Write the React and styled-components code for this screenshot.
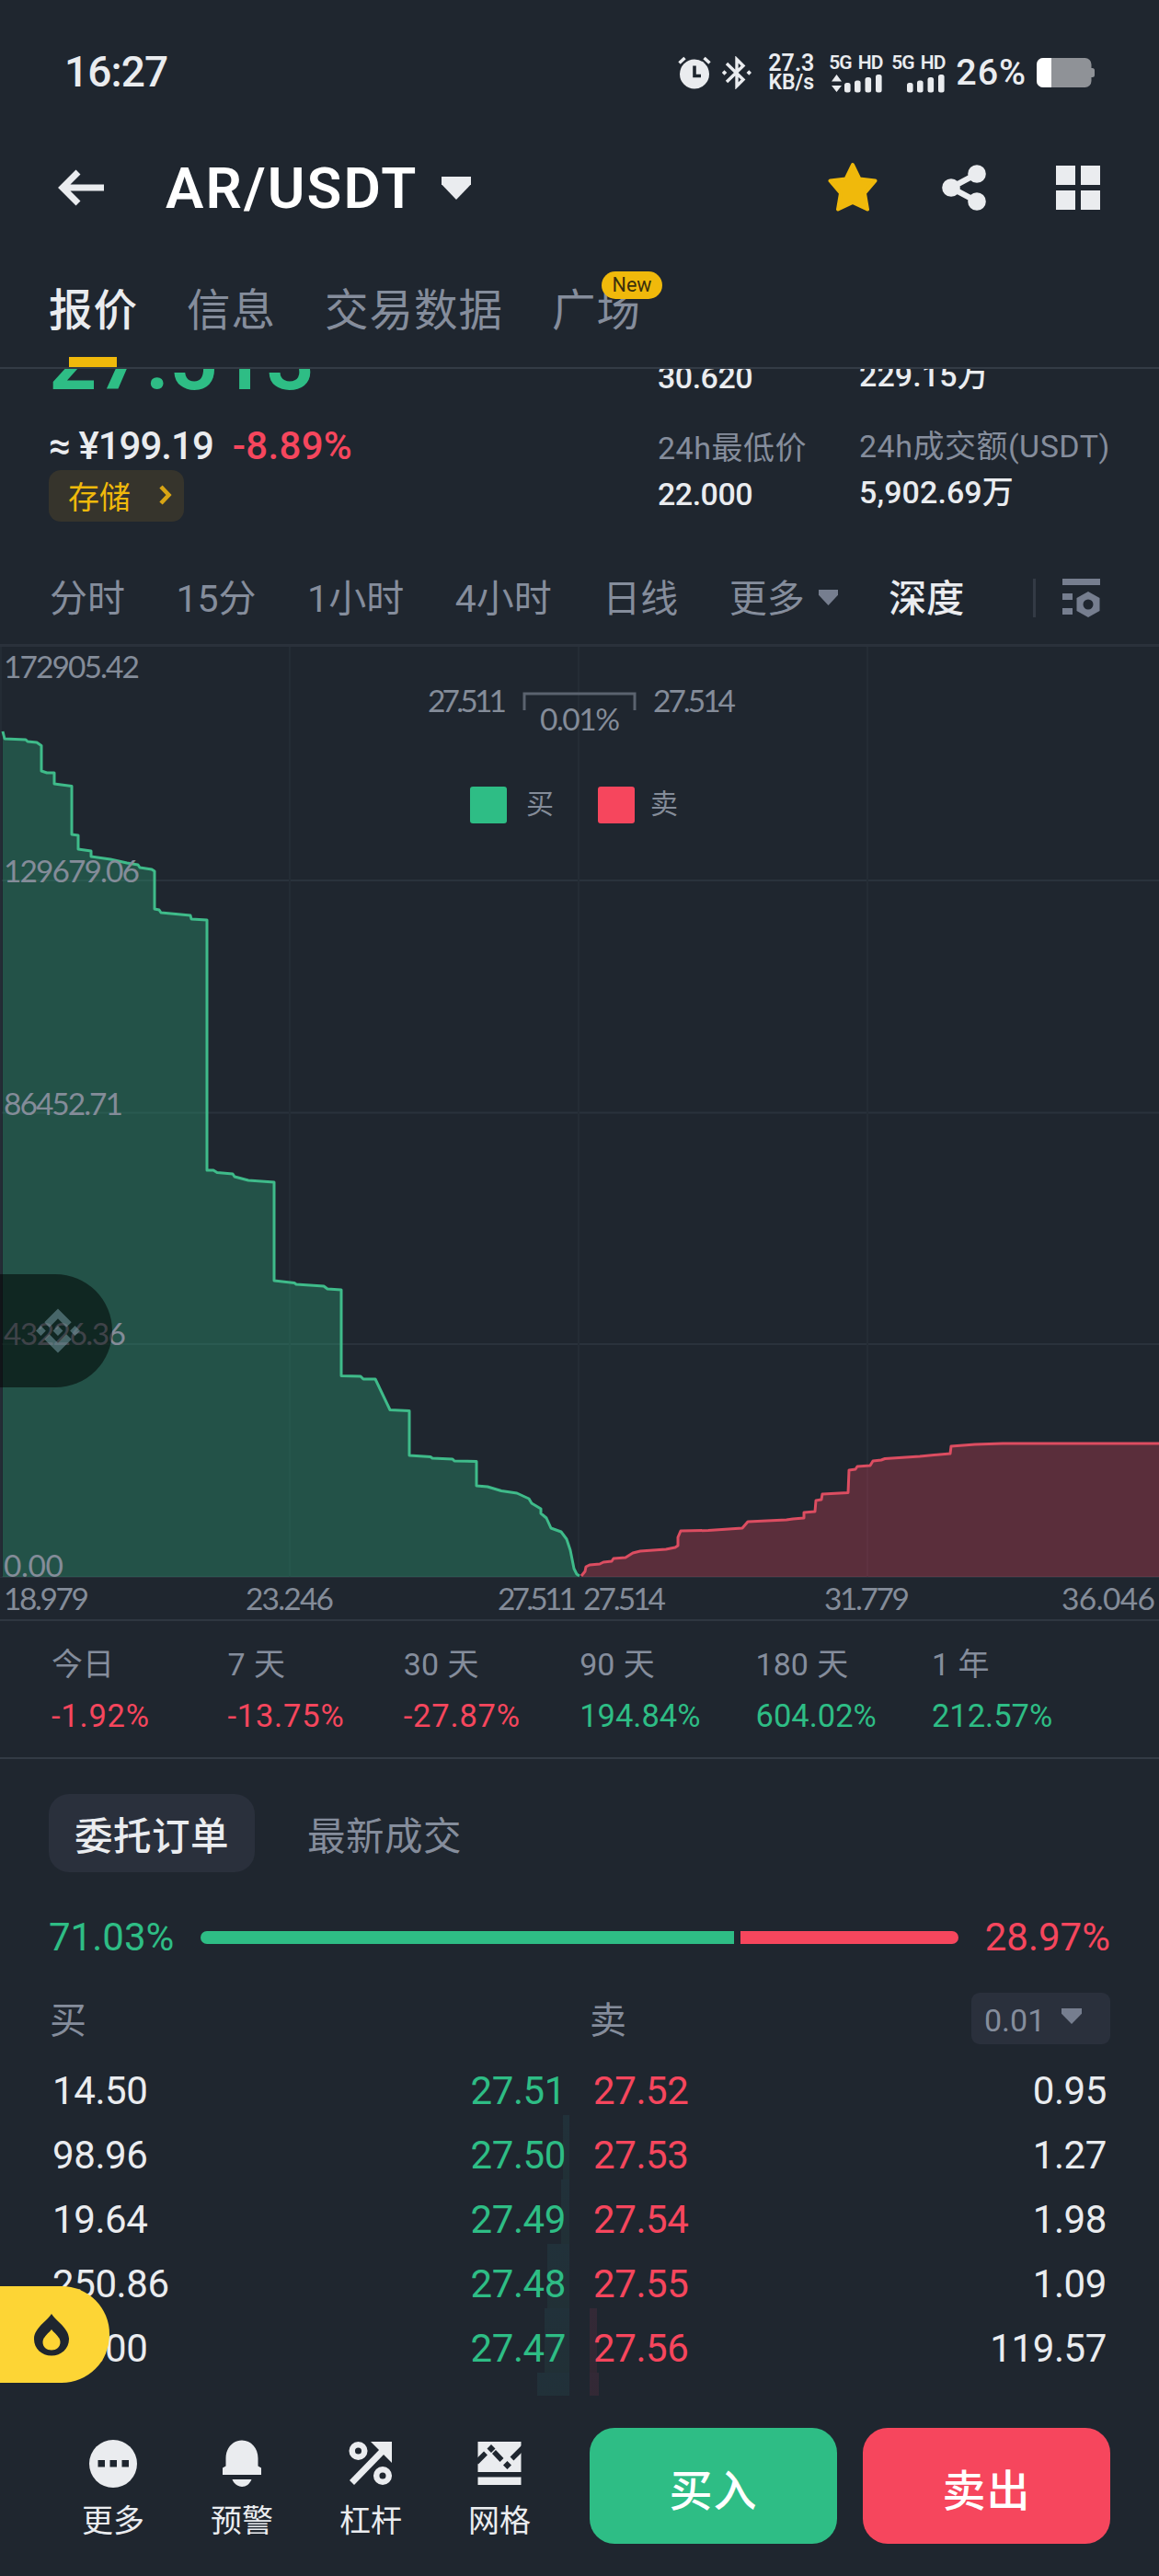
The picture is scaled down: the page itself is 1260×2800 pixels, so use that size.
import React from "react";
import styled, { createGlobalStyle } from "styled-components";

const colors = {
    bg: "#1f262f",
    panel: "#2a303c",
    line: "#2f3741",
    text: "#eaecef",
    muted: "#858d9c",
    icon: "#767e8f",
    green: "#2ebd85",
    red: "#f6465d",
    yellow: "#f0b90b",
};

const GlobalStyle = createGlobalStyle`
    * {
        box-sizing: border-box;
    }
    body {
        margin: 0;
        background-color: ${colors.bg};
        font-family: Roboto, "Noto Sans CJK SC", sans-serif;
        color: ${colors.text};
    }
    svg {
        display: block;
        flex: none;
    }
`;

const Screen = styled.div`
    position: relative;
    width: 1260px;
    height: 2800px;
    overflow: hidden;
    display: flex;
    flex-direction: column;
    white-space: nowrap;
    background-color: ${colors.bg};
`;

/* status bar */

const StatusBar = styled.div`
    height: 144px;
    padding: 14px 70px 0 70px;
    display: flex;
    align-items: center;
    justify-content: space-between;
`;

const Clock = styled.div`
    font-size: 46px;
    font-weight: 500;
    line-height: 60px;
    letter-spacing: -0.9px;
    margin-top: -2px;
`;

const StatusIcons = styled.div`
    display: flex;
    align-items: center;
`;

const NetSpeed = styled.div`
    width: 50px;
    margin-left: 18px;
    font-size: 25px;
    font-weight: 600;
    line-height: 21px;
    text-align: center;

    span {
        display: block;
        font-size: 23px;
    }
`;

const Signal = styled.div`
    width: 57px;
    margin-left: ${props => props.$gap}px;
    padding-top: 1px;
    display: flex;
    flex-direction: column;
    align-items: flex-end;
    font-size: 21px;
    font-weight: 600;
    line-height: 18px;
    letter-spacing: -1px;
    word-spacing: 3px;

    svg {
        margin-top: 4px;
    }
`;

const BatteryText = styled.div`
    margin: 0 11px 0 12px;
    font-size: 39.5px;
    font-weight: 500;
    line-height: 50px;
    letter-spacing: 0.9px;
`;

/* header */

const Header = styled.div`
    height: 120px;
    padding: 0 64px 0 63px;
    display: flex;
    align-items: center;
`;

const Pair = styled.h1`
    margin: 2px 26px 0 67px;
    font-size: 62px;
    font-weight: 600;
    line-height: 80px;
    letter-spacing: 2.1px;
    color: #fff;
`;

const HeaderActions = styled.div`
    margin-left: auto;
    display: flex;
    align-items: center;
    gap: 76px;

    svg:first-child {
        margin: -3px -6px 0 0;
    }
`;

/* page tabs */

const Tabs = styled.div`
    height: 137px;
    padding-left: 53px;
    display: flex;
    gap: 53px;
    border-bottom: 2px solid #333b45;
`;

const Tab = styled.div`
    position: relative;
    padding-top: 42px;
    font-size: 47.5px;
    font-weight: ${props => (props.$active ? 500 : 400)};
    line-height: 64px;
    letter-spacing: 1px;
    color: ${props => (props.$active ? colors.text : colors.muted)};

    &::after {
        content: "";
        display: ${props => (props.$active ? "block" : "none")};
        position: absolute;
        left: 22px;
        bottom: 0;
        width: 52px;
        height: 11px;
        background-color: ${colors.yellow};
    }
`;

const Badge = styled.span`
    position: absolute;
    left: 54px;
    top: 31px;
    width: 66px;
    height: 30px;
    border-radius: 15px;
    background-color: ${colors.yellow};
    color: #3a2f0c;
    font-size: 21.5px;
    font-weight: 400;
    line-height: 30px;
    letter-spacing: 0;
    text-align: center;
`;

/* ticker */

const Ticker = styled.div`
    height: 199px;
    padding: 0 53px;
    overflow: hidden;
    display: flex;
`;

const Quote = styled.div`
    width: 662px;
    margin-top: -54px;
`;

const LastPrice = styled.div`
    height: 90px;
    font-size: 92px;
    font-weight: 600;
    line-height: 90px;
    color: ${colors.green};
`;

const FiatLine = styled.div`
    margin-top: 23px;
    display: flex;
    gap: 21px;
    font-size: 42px;
    font-weight: 500;
    line-height: 50px;
    letter-spacing: -1px;
`;

const Change = styled.span`
    letter-spacing: 0.3px;
    color: ${colors.red};
`;

const Tag = styled.div`
    width: 147px;
    height: 56px;
    margin-top: 1px;
    padding: 0 13px 2px 21px;
    border-radius: 13px;
    display: flex;
    align-items: center;
    justify-content: space-between;
    background-color: #36342c;
    color: ${colors.yellow};
    font-size: 34px;
`;

const Stat = styled.div`
    margin-top: ${props => props.$top}px;
    width: 219px;
    font-size: 34px;
    line-height: 40px;
    font-weight: 500;
    letter-spacing: ${props => props.$spacing}px;

    p {
        margin: 37px 0 10px;
        font-weight: 400;
        letter-spacing: 0.5px;
        color: ${colors.muted};
    }
`;

/* intervals */

const Intervals = styled.div`
    height: 103px;
    padding: 2px 64px 0 54px;
    display: flex;
    align-items: center;
    gap: 55.5px;
    border-bottom: 3px solid #2a313b;
    font-size: 41px;
    line-height: 60px;
    color: ${colors.muted};
`;

const Interval = styled.div`
    display: flex;
    align-items: center;
    gap: 15px;
    font-weight: ${props => (props.$active ? 500 : 400)};
    color: ${props => (props.$active ? colors.text : "inherit")};

    svg {
        margin-top: -4px;
    }
`;

const ChartTools = styled.div`
    margin: -3px 0 0 auto;
    padding-left: 29px;
    height: 42px;
    display: flex;
    align-items: center;
    border-left: 3px solid #333a45;
`;

/* depth chart */

const ChartArea = styled.div`
    height: 1059px;
    border-bottom: 2px solid ${colors.line};
`;

/* performance */

const Periods = styled.div`
    height: 150px;
    padding: 27px 56px 0;
    display: grid;
    grid-template-columns: repeat(6, 191.4px);
    border-bottom: 2px solid #333b45;
`;

const Period = styled.div`
    font-size: 34px;
    line-height: 40px;
    color: ${colors.muted};
    word-spacing: 1px;
`;

const PeriodValue = styled.div`
    margin-top: 16px;
    font-size: 34.5px;
    letter-spacing: ${props => (props.$up ? 0 : 0.8)}px;
    color: ${props => (props.$up ? colors.green : colors.red)};
`;

/* order book */

const BookTabs = styled.div`
    padding: 38px 53px 0;
    display: flex;
    gap: 29px;
`;

const BookTab = styled.div`
    height: 85px;
    padding: 0 28px;
    border-radius: 22px;
    font-size: 41.5px;
    line-height: 93px;
    letter-spacing: 0.5px;
    font-weight: ${props => (props.$active ? 500 : 400)};
    color: ${props => (props.$active ? colors.text : colors.muted)};
    background-color: ${props => (props.$active ? colors.panel : "transparent")};
`;

const Ratio = styled.div`
    height: 60px;
    margin-top: 41px;
    padding: 0 53px;
    display: flex;
    align-items: center;
    justify-content: space-between;
    font-size: 42px;
    line-height: 62px;
`;

const RatioText = styled.span`
    color: ${props => (props.$up ? colors.green : colors.red)};
`;

const RatioBar = styled.div`
    width: 824px;
    height: 14px;
    display: flex;
    gap: 7px;
`;

const RatioPart = styled.div`
    flex-grow: ${props => props.$share};
    background-color: ${props => (props.$up ? colors.green : colors.red)};
    border-radius: ${props => (props.$up ? "7px 0 0 7px" : "0 7px 7px 0")};
`;

const BookHead = styled.div`
    height: 56px;
    margin-top: 30px;
    padding: 0 53px 0 54px;
    display: flex;
    font-size: 40px;
    line-height: 62px;
    color: ${colors.muted};

    span {
        width: 587px;
    }
`;

const Precision = styled.div`
    width: 151px;
    height: 56px;
    margin-left: auto;
    padding: 4px 31px 0 14px;
    border-radius: 9px;
    display: flex;
    align-items: center;
    justify-content: space-between;
    background-color: ${colors.panel};
    font-size: 34px;

    svg {
        margin-top: -10px;
    }
`;

const Book = styled.div`
    height: 382px;
    padding: 7px 53px 0;
    overflow: hidden;
    display: grid;
    grid-template-columns: 566px 566px;
    column-gap: 22px;
`;

const Order = styled.div`
    height: 70px;
    padding: 16px 4px 0;
    display: flex;
    justify-content: space-between;
    font-size: 42px;
    line-height: 56px;
    letter-spacing: -0.4px;
    color: ${colors.text};
    background: linear-gradient(${props => (props.$side === "buy" ? "#21313a, #213036" : "#332936, #312833")})
        no-repeat ${props => (props.$side === "buy" ? "right" : "left")} / ${props => props.$depth}px 100%;
`;

const Price = styled.span`
    color: ${props => (props.$side === "buy" ? colors.green : colors.red)};
`;

/* bottom bar */

const BottomBar = styled.div`
    height: 196px;
    padding: 0 53px;
    display: flex;
    align-items: flex-start;
`;

const Action = styled.div`
    width: 140px;
    padding-top: 48px;
    display: flex;
    flex-direction: column;
    align-items: center;
    font-size: 34px;
    line-height: 40px;

    svg {
        margin-bottom: 16px;
    }
`;

const TradeButton = styled.button`
    width: 269px;
    height: 126px;
    margin: 35px 0 0 28px;
    padding: 2px 0 0;
    border: 0;
    border-radius: 27px;
    font-family: inherit;
    font-size: 47px;
    font-weight: 500;
    letter-spacing: 1px;
    color: #fff;
    background-color: ${props => (props.$side === "buy" ? colors.green : colors.red)};
`;

/* floating handles */

const FloatingHandle = styled.div`
    position: absolute;
    left: 0;
    top: 1385px;
    width: 122px;
    height: 123px;
    padding-left: 39px;
    border-radius: 0 62px 62px 0;
    display: flex;
    align-items: center;
    background-color: rgba(0, 0, 0, 0.52);
`;

const HotHandle = styled.div`
    position: absolute;
    left: 0;
    top: 2485px;
    width: 119px;
    height: 105px;
    padding-left: 37px;
    border-radius: 0 52px 52px 0;
    display: flex;
    align-items: center;
    background-color: #fdd535;
`;

/* icons */

const CaretDown = ({ width, height, color }) => (
    <svg width={width} height={height} viewBox="0 0 32 24" preserveAspectRatio="none" fill={color}>
        <path d="M0 0h32v8L16 24 0 8z" />
    </svg>
);

const AlarmIcon = () => (
    <svg width="36" height="36" viewBox="0 0 36 36" fill="none">
        <circle cx="18" cy="19.5" r="16" fill={colors.text} />
        <path d="M1.5 7.5l6-5.5M34.5 7.5l-6-5.5" stroke={colors.text} strokeWidth="3.5" />
        <path d="M18 10.5v11h7" stroke={colors.bg} strokeWidth="3.6" />
    </svg>
);

const BluetoothIcon = () => (
    <svg width="32" height="36" viewBox="0 0 32 36" fill="none" stroke={colors.text} strokeWidth="3.4">
        <path d="M5 8l18 17.5-7 7v-29l7 7L5 28" />
        <path d="M2.5 15.2L5.3 18l-2.8 2.8L-.3 18zM29.3 15.2l2.8 2.800-2.8 2.8-2.800-2.8z" fill={colors.text} stroke="none" />
    </svg>
);

const SignalBars = ({ traffic }) => (
    <svg width="55" height="20" viewBox="0 0 55 20" fill={colors.text}>
        {traffic && <path d="M5.5 0L11 7.5H0zM5.5 19L0 12h11z" />}
        <rect x="14" y="9" width="6.6" height="10.5" rx="2.5" />
        <rect x="25" y="6.5" width="6.6" height="13" rx="2.5" />
        <rect x="36.5" y="3" width="6.6" height="16.5" rx="2.5" />
        <rect x="48" y="0" width="6.6" height="19.5" rx="2.5" />
    </svg>
);

const BatteryIcon = () => (
    <svg width="63" height="32" viewBox="0 0 63 32">
        <rect width="59.5" height="32" rx="7" fill="#8f9297" />
        <path d="M59 11h1.5a2.5 2.5 0 0 1 2.5 2.5v5a2.5 2.5 0 0 1-2.5 2.5H59z" fill="#8f9297" />
        <path d="M7 0h9v32H7a7 7 0 0 1-7-7V7a7 7 0 0 1 7-7z" fill="#fff" />
    </svg>
);

const BackIcon = () => (
    <svg width="50" height="40" viewBox="0 0 50 40" fill="none" stroke={colors.text} strokeWidth="7">
        <path d="M22 3L5 20l17 17M5 20h45" />
    </svg>
);

const StarIcon = () => (
    <svg width="54" height="54" viewBox="0 0 54 54" fill={colors.yellow} stroke={colors.yellow} strokeWidth="4" strokeLinejoin="round">
        <path d="M27 3l7.5 15.5 17 2L40 34l3 17.500L27 44 11 51.500 14 34 2.500 20.500l17-2z" />
    </svg>
);

const ShareIcon = () => (
    <svg width="48" height="50" viewBox="0 0 48 50" fill={colors.text}>
        <circle cx="10" cy="25" r="9.8" />
        <circle cx="38" cy="10" r="9.8" />
        <circle cx="38" cy="40" r="9.8" />
        <path d="M38 10L10 25l28 15" fill="none" stroke={colors.text} strokeWidth="6.5" />
    </svg>
);

const AppsIcon = () => (
    <svg width="48" height="48" viewBox="0 0 48 48" fill={colors.text}>
        <path d="M0 0h21v21H0zM27 0h21v21H27zM0 27h21v21H0zM27 27h21v21H27z" />
    </svg>
);

const ChevronIcon = () => (
    <svg width="14" height="22" viewBox="0 0 14 22" fill="none" stroke="#d9a514" strokeWidth="4.5">
        <path d="M2 2l8.5 9L2 20" />
    </svg>
);

const ChartSettingsIcon = () => (
    <svg width="41" height="42" viewBox="0 0 41 42" fill={colors.icon}>
        <path d="M0 0h41v7H0zM0 16h11v7H0zM0 32h11v7H0z" />
        <path fillRule="evenodd" d="M28 14l12.500 7v14L28 42l-12.500-7V21zm0 8.500a5.500 5.500 0 1 0 0 11 5.500 5.500 0 0 0 0-11z" />
    </svg>
);

const MoreIcon = () => (
    <svg width="52" height="52" viewBox="0 0 52 52">
        <circle cx="26" cy="26" r="26" fill={colors.text} />
        <path d="M9.5 22H17v7.5H9.5zM22.5 22H30v7.5h-7.5zM35.5 22H43v7.5h-7.5z" fill={colors.bg} />
    </svg>
);

const BellIcon = () => (
    <svg width="52" height="52" viewBox="0 0 52 52" fill={colors.text}>
        <path d="M8.5 20C8.5 9 16 .5 26 .5S43.5 9 43.5 20v8.5l3.500 2V38H5v-7.500l3.500-2z" />
        <path d="M15.5 43h21c-2 5-6 8-10.500 8s-8.500-3-10.500-8z" />
    </svg>
);

const LeverageIcon = () => (
    <svg width="52" height="52" viewBox="0 0 52 52" fill="none" stroke={colors.text}>
        <circle cx="12.5" cy="12" r="6.8" strokeWidth="6.5" />
        <circle cx="39" cy="39" r="6.8" strokeWidth="6.5" />
        <path d="M5.5 46.5L40 11" strokeWidth="7" />
        <path d="M26 2h23v23z" fill={colors.text} stroke="none" />
    </svg>
);

const GridIcon = () => (
    <svg width="52" height="52" viewBox="0 0 52 52">
        <path d="M2.5 2h47v33h-47zM2.5 40.500h47V49h-47z" fill={colors.text} />
        <path d="M1 24.500l10-10M20 13l8.500 9M39.500 20.500L52 8" fill="none" stroke={colors.bg} strokeWidth="5.5" />
        <path d="M17 5l4.500 4.500L17 14l-4.500-4.500zM34.500 23l4.500 4.500-4.500 4.500-4.500-4.500z" fill={colors.bg} />
    </svg>
);

const BinanceMark = () => (
    <svg width="48" height="49" viewBox="0 0 24 24" fill="#7fa6b0" opacity="0.5">
        <path d="M16.624 13.920l2.718 2.716-7.353 7.353-7.353-7.352 2.717-2.717 4.636 4.660 4.635-4.660zM21.260 9.284L24 12l-2.715 2.716L18.568 12l2.692-2.716zM11.989 9.285l2.716 2.691-2.716 2.717L9.272 12l2.717-2.715zM2.716 9.284L5.409 12l-2.692 2.692L0 12l2.716-2.716zM11.989.012l7.353 7.329-2.718 2.715-4.635-4.636-4.636 4.660-2.717-2.715 7.353-7.353z" />
    </svg>
);

const FlameIcon = () => (
    <svg width="38" height="46" viewBox="0 0 38 46" fillRule="evenodd" fill="#1f262f">
        <path d="M19 0c5 8 19 15.500 19 27.500 0 10.500-8.500 18-19 18S0 38 0 27.500C0 15.500 14 8 19 0zm0 17c-2.500 4-9.500 7.500-9.500 14 0 5 4.300 8.500 9.500 8.500s9.500-3.500 9.500-8.500c0-6.500-7-10-9.500-14z" />
    </svg>
);

/* data */

const bidCurve = [
    [3, 795], [5, 803], [28, 804], [30, 806], [40, 807], [45, 810.5], [45, 838], [51, 840], [59, 840], [59, 852],
    [78, 854.5], [78, 907], [85, 908], [85, 923], [99, 925], [99, 931], [120, 934], [138, 938], [150, 940], [152, 943],
    [165, 945], [168, 947], [168, 988], [173, 989], [175, 992], [207, 995], [208, 999], [225, 1000], [225, 1272],
    [232, 1272], [236, 1274.5], [253, 1276], [255, 1279], [270, 1283], [298, 1285], [298, 1392], [320, 1394.5],
    [322, 1396], [352, 1398], [356, 1401], [371, 1402], [371, 1495.5], [392, 1496], [395, 1499], [408, 1499],
    [424, 1532.5], [445, 1533.5], [445, 1582], [468, 1583.5], [470, 1585], [492, 1586], [494, 1588], [518, 1588.5],
    [518, 1615], [530, 1616], [545, 1620.5], [562, 1623], [575, 1629], [578, 1634], [588, 1640], [588, 1645],
    [594, 1650], [599, 1661], [610, 1665], [616, 1673], [620, 1685], [624, 1705], [627, 1711], [630, 1713],
];

const askCurve = [
    [632, 1713], [636, 1708], [637, 1703], [641, 1701], [652, 1700], [656, 1698], [665, 1697], [667, 1694], [680, 1693],
    [688, 1688], [696, 1686], [724, 1684], [734, 1682], [737, 1680], [737, 1671], [740, 1664], [770, 1663.5],
    [807, 1661], [813, 1654], [855, 1652], [862, 1651], [874, 1650], [874, 1644], [886, 1643], [887, 1631], [893, 1630],
    [894, 1624], [922, 1622.5], [923, 1598], [930, 1597], [932, 1594], [946, 1593], [949, 1588], [958, 1587],
    [962, 1585.5], [1000, 1583], [1033, 1580], [1034, 1572], [1060, 1570], [1090, 1569], [1260, 1569],
];

// text, left edge, baseline, drawn length
const chartLabels = [
    ["172905.42", 4, 736.5, 148],
    ["129679.06", 4, 958.5, 148],
    ["86452.71", 4, 1211.5, 130],
    ["43226.36", 4, 1462, 133],
    ["0.00", 4, 1714, 65],
    ["18.979", 4, 1750, 93],
    ["23.246", 267, 1750, 96],
    ["27.511", 541, 1750, 86],
    ["27.514", 634, 1750, 90],
    ["31.779", 896, 1750, 93],
    ["36.046", 1154, 1750, 102],
    ["27.511", 465, 774, 86],
    ["0.01%", 587, 794, 87],
    ["27.514", 710, 774, 90],
];

const periods = [
    ["今日", "-1.92%"],
    ["7 天", "-13.75%"],
    ["30 天", "-27.87%"],
    ["90 天", "194.84%"],
    ["180 天", "604.02%"],
    ["1 年", "212.57%"],
];

const bids = [
    ["14.50", "27.51", 0],
    ["98.96", "27.50", 7],
    ["19.64", "27.49", 9],
    ["250.86", "27.48", 24],
    ["10.00", "27.47", 27],
    ["", "", 35],
];

const asks = [
    ["27.52", "0.95", 0],
    ["27.53", "1.27", 0],
    ["27.54", "1.98", 0],
    ["27.55", "1.09", 0],
    ["27.56", "119.57", 8],
    ["", "", 10],
];

const toPath = points => "M" + points.map(p => p.join(" ")).join("L");

const DepthChart = () => (
    <ChartArea>
        <svg width="1260" height="1057" viewBox="0 703 1260 1057">
            <g stroke="#2a323c" strokeWidth="2">
                <path d="M0 957h1260M0 1209.5h1260M0 1461h1260M0 1714h1260" />
                <path d="M1 703v1011M315 703v1011M629 703v1011M943 703v1011" stroke="#242c35" />
            </g>
            <path d={toPath(bidCurve) + "V1714H3z"} fill="rgba(46, 189, 133, 0.29)" />
            <path d={toPath(askCurve) + "V1714H632z"} fill="rgba(246, 70, 93, 0.28)" />
            <path d={toPath(bidCurve)} fill="none" stroke="#3fbb8a" strokeWidth="3" strokeLinejoin="round" />
            <path d={toPath(askCurve)} fill="none" stroke="#dc4d61" strokeWidth="3" strokeLinejoin="round" />
            <path d="M570 772v-18h120v18" fill="none" stroke="#5b636f" strokeWidth="3" />
            <rect x="511" y="855" width="40" height="40" rx="3" fill={colors.green} />
            <rect x="650" y="855" width="40" height="40" rx="3" fill={colors.red} />
            <g fill="#848c99" fontFamily="Lato, sans-serif" fontSize="33.5">
                {chartLabels.map(([label, x, y, length], i) => (
                    <text key={i} x={x} y={y} textLength={length}>{label}</text>
                ))}
            </g>
            <g fill="#848c99" fontFamily="Noto Sans CJK SC, sans-serif" fontSize="30">
                <text x="572" y="884">买</text>
                <text x="707" y="884">卖</text>
            </g>
        </svg>
    </ChartArea>
);

const App = () => {
    return (
        <Screen>
            <GlobalStyle />

            <StatusBar>
                <Clock>16:27</Clock>
                <StatusIcons>
                    <AlarmIcon />
                    <svg width="12" height="1" />
                    <BluetoothIcon />
                    <NetSpeed>27.3<span>KB/s</span></NetSpeed>
                    <Signal $gap={17}>5G HD<SignalBars traffic /></Signal>
                    <Signal $gap={11}>5G HD<SignalBars /></Signal>
                    <BatteryText>26%</BatteryText>
                    <BatteryIcon />
                </StatusIcons>
            </StatusBar>

            <Header>
                <BackIcon />
                <Pair>AR/USDT</Pair>
                <CaretDown width={32} height={25} color={colors.text} />
                <HeaderActions>
                    <StarIcon />
                    <ShareIcon />
                    <AppsIcon />
                </HeaderActions>
            </Header>

            <Tabs>
                <Tab $active>报价</Tab>
                <Tab>信息</Tab>
                <Tab>交易数据</Tab>
                <Tab>广场<Badge>New</Badge></Tab>
            </Tabs>

            <Ticker>
                <Quote>
                    <LastPrice>27.513</LastPrice>
                    <FiatLine>
                        <span>≈ ¥199.19</span>
                        <Change>-8.89%</Change>
                    </FiatLine>
                    <Tag>存储<ChevronIcon /></Tag>
                </Quote>
                <Stat $top={-11} $spacing={-0.5}>
                    30.620
                    <p>24h最低价</p>
                    22.000
                </Stat>
                <Stat $top={-13} $spacing={0.1}>
                    229.15万
                    <p>24h成交额(USDT)</p>
                    5,902.69万
                </Stat>
            </Ticker>

            <Intervals>
                <Interval>分时</Interval>
                <Interval>15分</Interval>
                <Interval>1小时</Interval>
                <Interval>4小时</Interval>
                <Interval>日线</Interval>
                <Interval>更多<CaretDown width={21} height={17} color={colors.icon} /></Interval>
                <Interval $active>深度</Interval>
                <ChartTools><ChartSettingsIcon /></ChartTools>
            </Intervals>

            <DepthChart />

            <Periods>
                {periods.map(([label, value]) => (
                    <Period key={label}>
                        {label}
                        <PeriodValue $up={value[0] !== "-"}>{value}</PeriodValue>
                    </Period>
                ))}
            </Periods>

            <BookTabs>
                <BookTab $active>委托订单</BookTab>
                <BookTab>最新成交</BookTab>
            </BookTabs>

            <Ratio>
                <RatioText $up>71.03%</RatioText>
                <RatioBar>
                    <RatioPart $up $share={71.03} />
                    <RatioPart $share={28.97} />
                </RatioBar>
                <RatioText>28.97%</RatioText>
            </Ratio>

            <BookHead>
                <span>买</span>
                卖
                <Precision>0.01<CaretDown width={22} height={17} color={colors.icon} /></Precision>
            </BookHead>

            <Book>
                <div>
                    {bids.map(([amount, price, depth], i) => (
                        <Order key={i} $side="buy" $depth={depth}>
                            <span>{amount}</span>
                            <Price $side="buy">{price}</Price>
                        </Order>
                    ))}
                </div>
                <div>
                    {asks.map(([price, amount, depth], i) => (
                        <Order key={i} $side="sell" $depth={depth}>
                            <Price $side="sell">{price}</Price>
                            <span>{amount}</span>
                        </Order>
                    ))}
                </div>
            </Book>

            <BottomBar>
                <Action><MoreIcon />更多</Action>
                <Action><BellIcon />预警</Action>
                <Action><LeverageIcon />杠杆</Action>
                <Action><GridIcon />网格</Action>
                <TradeButton $side="buy">买入</TradeButton>
                <TradeButton $side="sell">卖出</TradeButton>
            </BottomBar>

            <FloatingHandle><BinanceMark /></FloatingHandle>
            <HotHandle><FlameIcon /></HotHandle>
        </Screen>
    );
};

export default App;
